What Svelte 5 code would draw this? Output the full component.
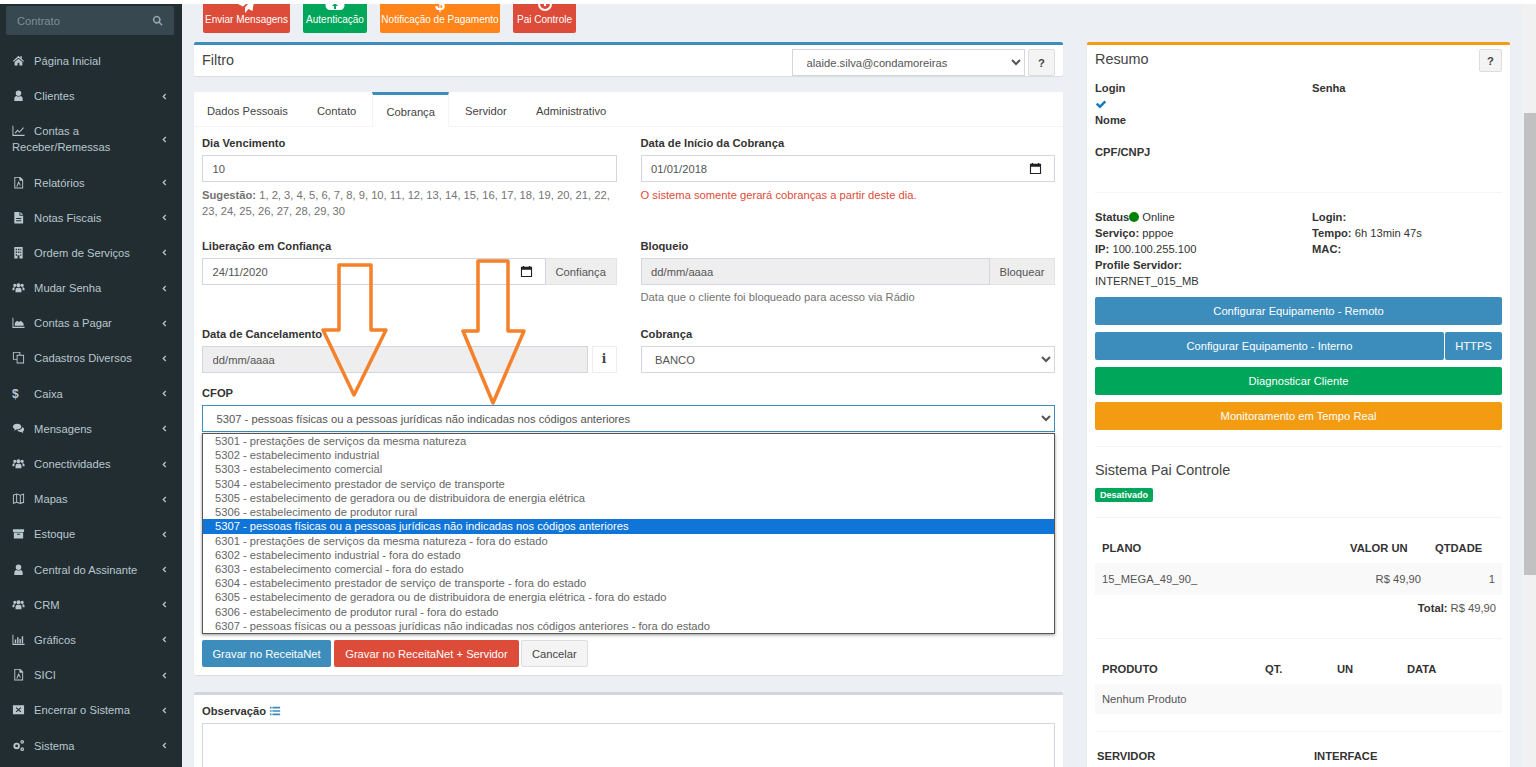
<script lang="ts">
  const icons: Record<string, string> = {
    home: "M7 2 1 7.5l.8.8L7 4l5.200 4.300.8-.8-2.500-2.200V2.500H9V4z M2.800 8.700V12.500H6V9.500h2v3h3.200V8.700L7 5.200z",
    user: "M7 1.500a3 3 0 1 1 0 6 3 3 0 0 1 0-6z M2.500 13v-2.500c0-1.600 1-2.800 2.400-3 .6.5 1.300.7 2.100.7s1.500-.2 2.100-.7c1.400.2 2.400 1.400 2.400 3V13z",
    line: "M.5 2h1v9.500h12V13H.5z M3 9.500 6 6l2 2 4-4.500.8.7-4.700 5.300-2-2-2.200 2.600z",
    pdf: "M2.500 1H9l3 3v9.500H2.500z M3.500 2v10.500h7.500V5H8V2z M4.700 11.300 6.800 6h.7l1.900 4.200-.7.4-1.400-2.600-1.800 3.500z",
    file: "M2.500 1H8v4h4v8.500H2.500z M9 1l3 3H9z M4.500 7.500H10v1H4.500z M4.500 10H10v1H4.500z",
    building: "M2.500 1h9v12.500h-9z M4 3v1.500h1.500V3z M6.500 3v1.500H8V3z M9 3v1.500h1V3z M4 6v1.500h1.500V6z M6.500 6v1.500H8V6z M9 6v1.500h1V6z M4 9v1.500h1.500V9z M9 9v1.500h1V9z M6 10v3.500h2V10z",
    users: "M7 2.500a2.200 2.200 0 1 1 0 4.400 2.200 2.200 0 0 1 0-4.400z M3 3a1.700 1.700 0 1 1 0 3.400A1.700 1.700 0 0 1 3 3z M11 3a1.700 1.700 0 1 1 0 3.400A1.700 1.700 0 0 1 11 3z M3.800 12V9.500c0-1 .8-2 1.800-2.200.9.500 1.900.500 2.800 0 1 .2 1.800 1.200 1.800 2.200V12z M.5 10V8.500c0-1 .7-1.700 1.500-1.800.4.3.8.4 1.300.4-.5.6-.8 1.400-.8 2.200v.7z M13.500 10V8.500c0-1-.7-1.700-1.500-1.800-.4.3-.8.4-1.300.4.5.6.8 1.400.8 2.200v.7z",
    area: "M.5 2h1v9.500h12V13H.5z M3 10.500V7.500L5.500 5l2 1.500L9.500 5l3 3v2.500z",
    clone: "M1 1h8v3h4v9.500H5V9.500H1z M2 2v6.500h3V4h3V2z M6 5v7.500h6V5z",
    comments: "M5.500 2C8 2 10 3.300 10 5S8 8 5.500 8h-1L2.500 9.500 3 7.500C1.800 7 1 6.100 1 5c0-1.700 2-3 4.500-3z M11 5.500c1.200.5 2 1.400 2 2.500 0 1-.6 1.800-1.500 2.300l.5 1.700-2-1.300c-2 .2-3.500-.4-4.300-1.700 3 .2 5.300-1.300 5.300-3.500z",
    map: "M1 3l4-1.500L9 3l4-1.500v10L9 13l-4-1.500L1 13z M2 3.700v7.800l2.500-1V2.800z M5.500 2.800v7.700l3 1.100V3.900z M9.500 3.900v7.700l2.500-1V2.900z",
    archive: "M1 2.500h12v3H1z M2 6h10v6.500H2z M5.500 7.300v1h3v-1z",
    bars: "M.5 2h1v9.500h12V13H.5z M3 7h1.500v4H3z M5.500 4.500H7V11H5.500z M8 6.500h1.500V11H8z M10.500 3.500H12V11h-1.500z",
    close: "M1 2.500h12v9.500H1z M4.800 4.500 4 5.300 6.200 7.200 4 9.200l.8.800L7 8l2.200 2 .8-.8-2.200-2L10 5.300l-.8-.8L7 6.400z",
    cogs: "M5 4a3.500 3.500 0 1 1 0 7 3.500 3.500 0 0 1 0-7z M5 6a1.500 1.500 0 1 0 0 3 1.500 1.500 0 0 0 0-3z M11 1a2 2 0 1 1 0 4 2 2 0 0 1 0-4z M11 2.300a.7.7 0 1 0 0 1.400.7.7 0 0 0 0-1.400z M11 9a2 2 0 1 1 0 4 2 2 0 0 1 0-4z M11 10.300a.7.7 0 1 0 0 1.400.7.7 0 0 0 0-1.400z",
  };

  const calendar = "M1 2h2V1h1.500v1h5V1H11v1h2v11H1z M2.200 5v6.800h9.600V5z";

  const menu = [
    { label: "Página Inicial", icon: "home", leaf: true },
    { label: "Clientes", icon: "user" },
    { label: "Contas a Receber/Remessas", icon: "line" },
    { label: "Relatórios", icon: "pdf" },
    { label: "Notas Fiscais", icon: "file" },
    { label: "Ordem de Serviços", icon: "building" },
    { label: "Mudar Senha", icon: "users" },
    { label: "Contas a Pagar", icon: "area" },
    { label: "Cadastros Diversos", icon: "clone" },
    { label: "Caixa", icon: "dollar" },
    { label: "Mensagens", icon: "comments" },
    { label: "Conectividades", icon: "users" },
    { label: "Mapas", icon: "map" },
    { label: "Estoque", icon: "archive" },
    { label: "Central do Assinante", icon: "user" },
    { label: "CRM", icon: "users" },
    { label: "Gráficos", icon: "bars" },
    { label: "SICI", icon: "pdf" },
    { label: "Encerrar o Sistema", icon: "close" },
    { label: "Sistema", icon: "cogs" },
  ];

  const tabs = ["Dados Pessoais", "Contato", "Cobrança", "Servidor", "Administrativo"];

  const suggestion = Array.from({ length: 30 }, (_, i) => i + 1).join(", ");

  const selectedCfop = "5307 - pessoas físicas ou a pessoas jurídicas não indicadas nos códigos anteriores";

  const cfops = [
    "5301 - prestações de serviços da mesma natureza",
    "5302 - estabelecimento industrial",
    "5303 - estabelecimento comercial",
    "5304 - estabelecimento prestador de serviço de transporte",
    "5305 - estabelecimento de geradora ou de distribuidora de energia elétrica",
    "5306 - estabelecimento de produtor rural",
    selectedCfop,
    "6301 - prestações de serviços da mesma natureza - fora do estado",
    "6302 - estabelecimento industrial - fora do estado",
    "6303 - estabelecimento comercial - fora do estado",
    "6304 - estabelecimento prestador de serviço de transporte - fora do estado",
    "6305 - estabelecimento de geradora ou de distribuidora de energia elétrica - fora do estado",
    "6306 - estabelecimento de produtor rural - fora do estado",
    "6307 - pessoas físicas ou a pessoas jurídicas não indicadas nos códigos anteriores - fora do estado",
  ];
</script>

<div class="page">
  <div class="strip"></div>
  <div class="shell">
    <aside class="sidebar">
      <div class="search">
        <span>Contrato</span>
        <svg viewBox="0 0 14 14" width="11" height="11"><path d="M6 1a5 5 0 0 1 4 8l3.500 3.500-1.200 1.200L8.800 10.200A5 5 0 1 1 6 1z M6 3a3 3 0 1 0 0 6 3 3 0 0 0 0-6z" fill-rule="evenodd" /></svg>
      </div>
      <ul class="menu">
        {#each menu as item}
          <li>
            {#if item.icon === "dollar"}
              <span class="ico dollar">$</span>
            {:else}
              <svg class="ico" viewBox="0 0 14 14"><path d={icons[item.icon]} fill-rule="evenodd" /></svg>
            {/if}
            {item.label}
            {#if !item.leaf}
              <svg class="chev" viewBox="0 0 6 8" width="5" height="7"><path d="M4.500 1 1.500 4l3 3" /></svg>
            {/if}
          </li>
        {/each}
      </ul>
    </aside>

    <main class="content">
      <div class="col-left">
        <div class="toolbar">
          <div class="app red">
            <svg viewBox="0 0 20 20" width="20" height="20"><path d="M18 1 1 10l5 2.500L15 5 8 13.500V19l3.500-4 4 2z" /></svg>
            Enviar Mensagens
          </div>
          <div class="app green">
            <svg viewBox="0 0 20 20" width="20" height="20"><path d="M5 7h10a4 4 0 0 1 0 9H5A4 4 0 0 1 5 7z M10 9l3 3h-2v3H9v-3H7z" fill-rule="evenodd" /></svg>
            Autenticação
          </div>
          <div class="app orange"><span class="app-glyph">$</span>Notificação de Pagamento</div>
          <div class="app red">
            <svg viewBox="0 0 20 20" width="20" height="20"><path d="M10 3a7 7 0 1 1 0 14 7 7 0 0 1 0-14z M10 5a5 5 0 1 0 0 10 5 5 0 0 0 0-10z M9 7h2v5H9z" fill-rule="evenodd" /></svg>
            Pai Controle
          </div>
        </div>

        <section class="box filter">
          <h3>Filtro</h3>
          <div class="filter-tools">
            <select class="control email"><option>alaide.silva@condamoreiras</option></select>
            <button class="help">?</button>
          </div>
        </section>

        <section class="box tabs-box">
          <nav class="tabs">
            {#each tabs as tab}
              <span class="tab" class:active={tab === "Cobrança"}>{tab}</span>
            {/each}
          </nav>
          <form class="form">
            <div class="row row-1">
              <div>
                <label for="venc">Dia Vencimento</label>
                <input id="venc" class="control" value="10" />
                <p class="hint lines"><b>Sugestão:</b> {suggestion}</p>
              </div>
              <div>
                <label for="inicio">Data de Início da Cobrança</label>
                <div class="date">
                  <input id="inicio" class="control" value="01/01/2018" />
                  <svg viewBox="0 0 14 14" width="13" height="13"><path d={calendar} fill-rule="evenodd" /></svg>
                </div>
                <p class="hint error">O sistema somente gerará cobranças a partir deste dia.</p>
              </div>
            </div>

            <div class="row row-2">
              <div>
                <label for="lib">Liberação em Confiança</label>
                <div class="group">
                  <div class="date">
                    <input id="lib" class="control" value="24/11/2020" />
                    <svg viewBox="0 0 14 14" width="13" height="13"><path d={calendar} fill-rule="evenodd" /></svg>
                  </div>
                  <span class="addon">Confiança</span>
                </div>
              </div>
              <div>
                <label for="bloq">Bloqueio</label>
                <div class="group">
                  <input id="bloq" class="control" value="dd/mm/aaaa" disabled />
                  <span class="addon">Bloquear</span>
                </div>
                <p class="hint">Data que o cliente foi bloqueado para acesso via Rádio</p>
              </div>
            </div>

            <div class="row row-3">
              <div>
                <label for="canc">Data de Cancelamento</label>
                <div class="group info">
                  <input id="canc" class="control" value="dd/mm/aaaa" disabled />
                  <span class="info-btn">i</span>
                </div>
              </div>
              <div>
                <label for="cob">Cobrança</label>
                <select id="cob" class="control"><option>BANCO</option></select>
              </div>
            </div>

            <div class="cfop">
              <label for="cfop">CFOP</label>
              <select id="cfop" class="control focused"><option>{selectedCfop}</option></select>
              <ul class="dropdown">
                {#each cfops as cfop}
                  <li class:selected={cfop === selectedCfop}>{cfop}</li>
                {/each}
              </ul>
            </div>

            <div class="actions">
              <span class="btn blue">Gravar no ReceitaNet</span>
              <span class="btn red">Gravar no ReceitaNet + Servidor</span>
              <span class="btn plain">Cancelar</span>
            </div>
          </form>
        </section>

        <section class="box obs">
          <div class="obs-label">
            <b>Observação</b>
            <svg viewBox="0 0 14 14" width="12" height="12"><path d="M1 2h2v2H1z M4 2h9v2H4z M1 6h2v2H1z M4 6h9v2H4z M1 10h2v2H1z M4 10h9v2H4z" /></svg>
          </div>
          <div class="textarea"></div>
        </section>
      </div>

      <section class="box summary">
        <div class="summary-head">
          <h3>Resumo</h3>
          <button class="help small">?</button>
        </div>
        <div class="pairs">
          <div>
            <b>Login</b>
            <svg class="check" viewBox="0 0 14 14" width="12" height="16"><path d="M1 7.500 3 5.500l2.800 2.800L11 3l2 2-7.200 7.200z" /></svg>
            <b>Nome</b>
            <br />
            <br />
            <b>CPF/CNPJ</b>
          </div>
          <div><b>Senha</b></div>
        </div>
        <hr class="sep sep-a" />
        <div class="pairs">
          <div>
            <b>Status</b><i class="dot"></i> Online<br />
            <b>Serviço:</b> pppoe<br />
            <b>IP:</b> 100.100.255.100<br />
            <b>Profile Servidor:</b><br />
            INTERNET_015_MB
          </div>
          <div>
            <b>Login:</b><br />
            <b>Tempo:</b> 6h 13min 47s<br />
            <b>MAC:</b>
          </div>
        </div>
        <div class="stack">
          <span class="wide blue">Configurar Equipamento - Remoto</span>
          <div class="split">
            <span class="wide blue">Configurar Equipamento - Interno</span>
            <span class="wide blue https">HTTPS</span>
          </div>
          <span class="wide green">Diagnosticar Cliente</span>
          <span class="wide amber">Monitoramento em Tempo Real</span>
        </div>
        <hr class="sep sep-b" />
        <h3 class="pai">Sistema Pai Controle</h3>
        <span class="badge">Desativado</span>
        <hr class="sep sep-c" />
        <table class="plan">
          <colgroup><col style="width:248px" /><col style="width:85px" /><col style="width:74px" /></colgroup>
          <thead><tr><th>PLANO</th><th>VALOR UN</th><th>QTDADE</th></tr></thead>
          <tbody><tr><td>15_MEGA_49_90_</td><td class="num">R$ 49,90</td><td class="num">1</td></tr></tbody>
        </table>
        <p class="total"><b>Total:</b> R$ 49,90</p>
        <hr class="sep sep-d" />
        <table class="products">
          <colgroup><col style="width:163px" /><col style="width:72px" /><col style="width:70px" /><col style="width:102px" /></colgroup>
          <thead><tr><th>PRODUTO</th><th>QT.</th><th>UN</th><th>DATA</th></tr></thead>
          <tbody><tr><td colspan="4">Nenhum Produto</td></tr></tbody>
        </table>
        <hr class="sep sep-e" />
        <div class="pairs server"><b>SERVIDOR</b><b>INTERFACE</b></div>
      </section>
    </main>

    <div class="scrollbar"><div class="thumb"></div></div>
  </div>

  <!-- setas desenhadas por cima do print -->
  <svg class="arrows" viewBox="0 0 1536 767" width="1536" height="767">
    <path d="M339 265H371V330H386L354 395 323 330H339z" />
    <path d="M478 261H508V331H524L493 403 463 331H478z" />
  </svg>
</div>

<style>
  :global(body) {
    margin: 0;
    font-family: "Liberation Sans", Arial, sans-serif;
    font-size: 11.2px;
    line-height: 16px;
    color: #333;
  }

  .page {
    position: relative;
    width: 1536px;
    height: 767px;
    overflow: hidden;
    background: #ecf0f5;
  }

  .strip {
    height: 4px;
    background: #fff;
  }

  .shell {
    display: flex;
    height: 763px;
  }

  .sidebar {
    flex: 0 0 182px;
    background: #222d32;
    color: #b8c7ce;
  }

  .search {
    display: flex;
    justify-content: space-between;
    align-items: center;
    height: 29px;
    margin: 2px 8px 0 6px;
    padding: 0 11px;
    background: #374850;
    border-radius: 2px;
    color: #7f8f96;
  }

  .search svg {
    fill: #9aa5aa;
  }

  .menu {
    margin: 8.4px 0 0;
    padding: 0;
    list-style: none;
  }

  .menu li {
    position: relative;
    padding: 9.6px 30px 9.6px 12px;
  }

  .ico {
    display: inline-block;
    width: 13px;
    height: 13px;
    margin: 0 6px 0 0;
    vertical-align: -2px;
    fill: #b8c7ce;
  }

  .dollar {
    font-weight: 700;
    font-size: 12px;
    vertical-align: baseline;
  }

  .chev {
    position: absolute;
    right: 15px;
    top: 50%;
    margin-top: -3.500px;
    fill: none;
    stroke: #b8c7ce;
    stroke-width: 1.500;
  }

  .content {
    flex: 1;
    display: flex;
    align-items: flex-start;
    gap: 24px;
    padding-left: 12px;
  }

  .col-left {
    flex: 0 0 869px;
  }

  .toolbar {
    display: flex;
    gap: 13px;
    height: 29px;
    padding-left: 9px;
    overflow: hidden;
  }

  .app {
    display: flex;
    flex-direction: column;
    align-items: center;
    justify-content: flex-end;
    height: 29px;
    padding: 0 4px 5px;
    box-sizing: border-box;
    font-size: 10px;
    color: #fff;
    border-radius: 0 0 2px 2px;
    white-space: nowrap;
  }

  .app svg {
    flex: none;
    margin-bottom: -2px;
    fill: #fff;
  }

  .app-glyph {
    flex: none;
    height: 8px;
    line-height: 0;
    font-size: 18px;
    font-weight: 700;
  }

  .app.red {
    background: #dd4b39;
    width: 87px;
    box-sizing: border-box;
  }

  .app.red:last-child {
    width: 63px;
  }

  .app.green {
    background: #00a65a;
    width: 64px;
  }

  .app.orange {
    background: #ff851b;
    width: 120px;
  }

  .box {
    background: #fff;
    border-radius: 2px;
    box-shadow: 0 1px 1px rgba(0, 0, 0, 0.08);
  }

  h3 {
    margin: 0;
    font-size: 14.4px;
    font-weight: 400;
    line-height: 20px;
    color: #444;
  }

  .filter {
    display: flex;
    justify-content: space-between;
    align-items: flex-start;
    box-sizing: border-box;
    height: 34px;
    margin-top: 9px;
    padding: 4px 8px 0;
    border-top: 3px solid #3c8dbc;
  }

  .filter h3 {
    margin-top: 1px;
  }

  .filter-tools {
    display: flex;
    gap: 3px;
  }

  .control {
    display: block;
    box-sizing: border-box;
    width: 100%;
    height: 27px;
    padding: 0 9.6px;
    border: 1px solid #d2d6de;
    border-radius: 0;
    background: #fff;
    color: #555;
    font: inherit;
    outline: none;
  }

  .control:disabled {
    background: #eee;
    opacity: 1;
  }

  .control.focused {
    border-color: #3c8dbc;
  }

  .email {
    width: 233px;
  }

  .help {
    width: 27px;
    height: 27px;
    padding: 0;
    border: 1px solid #ddd;
    border-radius: 2px;
    background: #f4f4f4;
    font: 700 11.2px "Liberation Sans", Arial, sans-serif;
    color: #444;
  }

  .help.small {
    width: 23px;
    height: 23px;
  }

  .tabs-box {
    margin-top: 16px;
  }

  .tabs {
    display: flex;
    height: 35px;
    box-sizing: border-box;
    border-bottom: 1px solid #f4f4f4;
    gap: 3.200px;
  }

  .tab {
    padding: 11px 13px 0;
    color: #444;
  }

  .tab.active {
    margin-bottom: -1px;
    padding-top: 9px;
    background: #fff;
    border-top: 3px solid #3c8dbc;
    border-left: 1px solid #f4f4f4;
    border-right: 1px solid #f4f4f4;
  }

  .form {
    padding: 8px 8px 8px;
  }

  .row {
    display: grid;
    grid-template-columns: 1fr 1fr;
    gap: 24px;
  }

  .row-1 {
    height: 103px;
  }

  .row-2 {
    height: 88px;
  }

  .row-3 {
    height: 59px;
  }

  label {
    display: block;
    margin-bottom: 4px;
    font-weight: 700;
  }

  .hint {
    margin: 4px 0 0;
    color: #737373;
  }

  .hint.lines {
    margin-top: 5px;
  }

  .hint.error {
    margin-top: 5px;
    color: #dd4b39;
  }

  .date {
    position: relative;
    flex: 1;
  }

  .date svg {
    position: absolute;
    right: 13px;
    top: 7px;
    fill: #222;
  }

  .group {
    display: flex;
  }

  .group > .control {
    flex: 1;
  }

  .addon {
    flex: none;
    box-sizing: border-box;
    height: 27px;
    padding: 5px 9.600px;
    background: #eee;
    border: 1px solid #e4e4e4;
    border-left: 0;
    color: #555;
  }

  .group.info {
    gap: 4px;
  }

  .info-btn {
    flex: none;
    box-sizing: border-box;
    width: 25px;
    height: 27px;
    padding-top: 5px;
    border: 1px solid #eee;
    text-align: center;
    font: 700 12px "DejaVu Serif", serif;
    color: #444;
  }

  .cfop {
    position: relative;
  }

  .dropdown {
    position: absolute;
    z-index: 2;
    left: 0;
    right: 0;
    top: 100%;
    box-sizing: border-box;
    height: 201px;
    margin: 1px 0 0;
    padding: 0;
    list-style: none;
    background: #fff;
    border: 1px solid #555;
    box-shadow: 0 1px 3px rgba(0, 0, 0, 0.4);
    color: #666;
  }

  .dropdown li {
    height: 14.230px;
    padding-left: 12px;
    line-height: 14px;
    white-space: nowrap;
  }

  .dropdown li.selected {
    background: #0f75d9;
    color: #fff;
  }

  .actions {
    display: flex;
    gap: 3px;
    margin-top: 208px;
  }

  .btn {
    height: 27px;
    box-sizing: border-box;
    padding: 5.500px 10px;
    border-radius: 2px;
    color: #fff;
  }

  .btn.blue {
    background: #3c8dbc;
    width: 129px;
    text-align: center;
  }

  .btn.red {
    background: #dd4b39;
    width: 185px;
    text-align: center;
  }

  .btn.plain {
    background: #f4f4f4;
    border: 1px solid #ddd;
    color: #444;
    padding-top: 4.500px;
    margin-left: -1px;
  }

  .obs {
    margin-top: 17px;
    height: 120px;
    padding: 8px;
    box-sizing: border-box;
    border-top: 3px solid #d2d6de;
    border-radius: 2px 2px 0 0;
  }

  .obs-label svg {
    vertical-align: -2px;
    fill: #3c8dbc;
  }

  .textarea {
    height: 80px;
    margin-top: 4px;
    border: 1px solid #d2d6de;
  }

  .summary {
    flex: 0 0 407px;
    height: 800px;
    margin-top: 38px;
    padding: 4px 8px;
    border-top: 3px solid #f39c12;
  }

  .summary-head {
    display: flex;
    justify-content: space-between;
    align-items: flex-start;
    height: 31px;
  }

  .summary-head h3 {
    margin-top: 0;
  }

  .pairs {
    display: grid;
    grid-template-columns: 217px 1fr;
  }

  .check {
    display: block;
    fill: #1678be;
  }

  .dot {
    display: inline-block;
    width: 10px;
    height: 10px;
    border-radius: 50%;
    background: #008000;
    vertical-align: -1px;
  }

  .sep {
    border: 0;
    border-top: 1px solid #f4f4f4;
    margin: 0;
  }

  .sep-a {
    margin: 32px 0 16px;
  }

  .stack {
    display: flex;
    flex-direction: column;
    gap: 7.500px;
    margin-top: 8px;
  }

  .wide {
    display: block;
    box-sizing: border-box;
    height: 27.500px;
    padding-top: 6px;
    border-radius: 2px;
    color: #fff;
    text-align: center;
  }

  .split {
    display: flex;
    gap: 1px;
  }

  .split .wide {
    flex: 1;
  }

  .split .https {
    flex: 0 0 57px;
  }

  .wide.blue {
    background: #3c8dbc;
  }

  .wide.green {
    background: #00a65a;
  }

  .wide.amber {
    background: #f39c12;
  }

  .sep-b {
    margin: 16px 0 13px;
  }

  .pai {
    font-size: 14.400px;
  }

  .badge {
    display: inline-block;
    margin-top: 8px;
    padding: 0 5px;
    height: 14px;
    border-radius: 2px;
    background: #00a65a;
    color: #fff;
    font-size: 9px;
    font-weight: 700;
    line-height: 14px;
    vertical-align: top;
  }

  .sep-c {
    margin: 15px 0 16px;
  }

  table {
    width: 407px;
    table-layout: fixed;
    border-collapse: collapse;
  }

  th {
    height: 29px;
    padding: 0 7px;
    text-align: left;
    font-weight: 700;
  }

  td {
    padding: 0 7px;
    background: #f9f9f9;
    color: #555;
  }

  .plan td {
    height: 32px;
  }

  .products td {
    height: 30px;
  }

  .num {
    text-align: right;
  }

  .total {
    margin: 5px 0 0;
    padding-right: 6px;
    text-align: right;
    color: #555;
  }

  .total b {
    color: #333;
  }

  .sep-d {
    margin: 22px 0 16px;
  }

  .sep-e {
    margin: 17px 0 16px;
  }

  .server {
    padding-left: 2px;
  }

  .scrollbar {
    position: absolute;
    right: 0;
    top: 4px;
    bottom: 0;
    width: 14px;
    background: #f1f1f1;
  }

  .thumb {
    margin: 109px 0 0 2px;
    height: 462px;
    background: #c1c1c1;
  }

  .arrows {
    position: absolute;
    z-index: 3;
    left: 0;
    top: 0;
    pointer-events: none;
  }

  .arrows path {
    fill: none;
    stroke: #f5812a;
    stroke-width: 3.500;
    stroke-linejoin: round;
  }
</style>
